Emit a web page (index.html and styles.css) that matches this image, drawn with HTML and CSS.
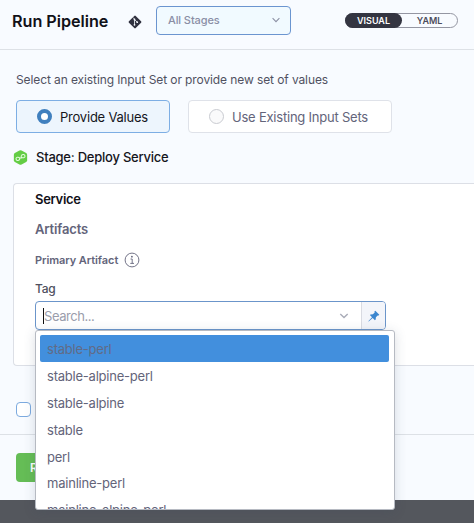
FILE: index.html
```html
<!DOCTYPE html>
<html lang="en">
<head>
<meta charset="utf-8">
<title>Run Pipeline</title>
<link rel="stylesheet" href="styles.css">
</head>
<body>
<div class="dialog">
  <header class="header">
    <h1 class="title"><span>Run Pipeline</span></h1>
    <svg class="git" viewBox="0 0 14 14" width="14" height="14">
      <rect x="2.2" y="2.2" width="9.6" height="9.6" rx="1" transform="rotate(45 7 7)" fill="#30313f"/>
      <path d="M5 2.500 6.500 4.200V9.800M6.500 4.500 9.200 7.100" fill="none" stroke="#f8fbff" stroke-width=".8"/>
      <g fill="#f8fbff"><circle cx="6.500" cy="4.500" r=".9"/><circle cx="6.500" cy="9.800" r=".9"/><circle cx="9.200" cy="7.200" r=".9"/></g>
    </svg>
    <div class="stages"><span>All Stages</span>
      <svg viewBox="0 0 8 6" width="8" height="6"><path d="M.6 1.2 4 4.600 7.400 1.2" fill="none" stroke="#8c90a4" stroke-width="1.1"/></svg>
    </div>
    <div class="toggle"><span class="mode active">VISUAL</span><span class="mode">YAML</span></div>
  </header>
  <main class="content">
    <p class="intro"><span>Select an existing Input Set or provide new set of values</span></p>
    <div class="choices">
      <label class="choice selected"><i class="radio"></i><span>Provide Values</span></label>
      <label class="choice existing"><i class="radio"></i><span>Use Existing Input Sets</span></label>
    </div>
    <div class="stage">
      <svg viewBox="0 0 14 14" width="15" height="15">
        <path d="M6 .4Q7 0 8 .4L12.3 2.8Q13.2 3.4 13.2 4.4V9.6Q13.2 10.6 12.3 11.2L8 13.6Q7 14 6 13.6L1.7 11.2Q.8 10.6.8 9.6V4.4Q.8 3.4 1.7 2.8Z" fill="#64cd45"/>
        <path d="M6.2 8.8C5 10.5 2.8 9.8 2.8 8.2S5 6.200 6.300 7.400 M7.800 5.200C9 3.500 11.200 4.200 11.200 5.800S9 7.800 7.700 6.600M6.200 8.800V7.400H7.700V5.300" fill="none" stroke="#e2fbdc" stroke-width="1"/>
      </svg>
      <span>Stage: Deploy Service</span>
    </div>
    <section class="card">
      <h2 class="service"><span>Service</span></h2>
      <h3 class="artifacts"><span>Artifacts</span></h3>
      <div class="primary"><span>Primary Artifact</span>
        <svg viewBox="0 0 16 16" width="16" height="16"><circle cx="8" cy="8" r="6.900" fill="none" stroke="#63647a" stroke-width=".9"/><circle cx="7.900" cy="4.700" r=".9" fill="#63647a"/><path d="M6.500 7H8.200V11.300M6.300 11.400H10" fill="none" stroke="#63647a" stroke-width=".9"/></svg>
      </div>
      <div class="tag"><span>Tag</span></div>
      <div class="field">
        <div class="search"><i class="caret"></i><span>Search...</span>
          <svg viewBox="0 0 10 6" width="10" height="6"><path d="M1.300 1 5 4.600 8.700 1" fill="none" stroke="#a9acb8" stroke-width="1.400"/></svg>
        </div>
        <div class="pin"><svg viewBox="0 0 12 12" width="12" height="12"><path d="M7.300.7 11.300 4.700 10.600 5.600 9.700 5.400 7.900 7.200 7.700 9.500 6.900 10.200 4.700 8 .7 11.500.3 11.200 4 7.300 1.900 5.100 2.600 4.400 4.900 4.200 6.700 2.400 6.400 1.500Z" fill="#3b86cf"/></svg></div>
        <ul class="menu">
          <li class="highlight"><span>stable-perl</span></li>
          <li><span>stable-alpine-perl</span></li>
          <li><span>stable-alpine</span></li>
          <li><span>stable</span></li>
          <li><span>perl</span></li>
          <li><span>mainline-perl</span></li>
          <li><span>mainline-alpine-perl</span></li>
        </ul>
      </div>
    </section>
    <i class="checkbox"></i>
  </main>
  <footer class="footer"><button class="run">Run</button></footer>
</div>
</body>
</html>
```
FILE: styles.css
```css
* { box-sizing: border-box; }
body { margin: 0; height: 523px; overflow: hidden; background: #54575d; font-family: Inter, "Liberation Sans", sans-serif; font-size: 13px; color: #63647a; }
h1, h2, h3, p, ul { margin: 0; padding: 0; font-weight: inherit; }
svg { display: block; flex: none; }
.dialog { height: 500px; background: #f8fbff; display: flex; flex-direction: column; }
.header { height: 50px; flex: none; display: flex; border-bottom: 1px solid #dde1e6; padding-left: 12px; }
.title { width: 116px; font-size: 16.2px; letter-spacing: -.03px; font-weight: 600; line-height: 20px; padding-top: 11px; color: #111118; white-space: nowrap; }
.git { margin-top: 15px; }
.stages { width: 135px; height: 29px; margin: 6px 0 0 14px; border: 1px solid #6b95d0; border-radius: 4px; background: #f1faff; display: flex; align-items: center; justify-content: space-between; padding: 0 10px 1px 11px; font-size: 11px; letter-spacing: -.1px; font-weight: 500; color: #8a8ea5; }
.toggle { width: 113px; height: 15px; margin: 13px 0 0 54px; border: 1px solid #9496a2; border-radius: 8px; display: flex; font-size: 9px; font-weight: 600; line-height: 13px; color: #4b4c5b; }
.mode { flex: 1; text-align: center; }
.mode.active { flex: none; width: 57px; margin: -1px 0 -1px -1px; line-height: 15px; border-radius: 8px; background: #343541; color: #fff; }
.content { height: 385px; flex: none; border-bottom: 1px solid #dde1e6; }
.intro { height: 50px; padding: 21px 0 0 16px; font-size: 12px; letter-spacing: -.1px; line-height: 17px; color: #50515f; white-space: nowrap; }
.choices { display: flex; gap: 18px; padding-left: 16px; }
.choice { width: 154px; height: 33px; border: 1px solid #dfe2e9; border-radius: 4px; background: #fff; display: flex; align-items: center; gap: 8px; padding-left: 20px; letter-spacing: -.22px; white-space: nowrap; }
.choice.existing { width: 204px; }
.choice.selected { border-color: #7daee4; background: #edf5fd; color: #15151c; }
.radio { width: 15px; height: 15px; border: 1px solid #c9cbd1; border-radius: 50%; background: #fafafb; }
.selected .radio { border: 4px solid #3f7fbe; background: #fff; }
.stage { height: 50px; padding: 0 0 2px 13px; display: flex; align-items: center; gap: 8px; font-size: 13px; letter-spacing: -.24px; font-weight: 500; color: #15151c; }
.card { height: 183px; margin-left: 13px; padding-left: 21px; background: #fff; border: solid #dcdfe6; border-width: 1px 0 1px 1px; border-radius: 4px 0 0 4px; }
.service { height: 30px; line-height: 31px; font-size: 13px; letter-spacing: -.3px; font-weight: 600; color: #111118; }
.artifacts { height: 30px; line-height: 31px; font-size: 13px; letter-spacing: -.15px; font-weight: 600; }
.primary { height: 31px; display: flex; align-items: center; gap: 6px; font-size: 11px; letter-spacing: -.08px; font-weight: 600; }
.tag { height: 26px; line-height: 28px; font-size: 12px; letter-spacing: -.2px; font-weight: 500; color: #4f505e; }
.field { position: relative; width: 351px; height: 29px; border: 1px solid #6b95ca; border-radius: 4px; display: flex; background: #fff; }
.search { flex: 1; display: flex; align-items: center; padding: 0 12px 0 7px; font-size: 13px; letter-spacing: -.45px; color: #9a9dab; }
.search svg { margin-left: auto; }
.caret { width: 1px; height: 16px; background: #111; }
.pin { width: 24px; background: #f3f5fa; border-left: 1px solid #d9dbe2; border-radius: 0 3px 3px 0; display: flex; align-items: center; justify-content: center; }
.menu { position: absolute; z-index: 1; top: 28px; left: -1px; width: 360px; height: 180px; overflow: hidden; list-style: none; padding: 4px 5px 5px 4px; border: 1px solid #b6bac2; border-radius: 3px; background: #fff; box-shadow: 0 2px 12px #3440582e; }
.menu li { height: 26.9px; line-height: 28px; padding-left: 7px; white-space: nowrap; font-size: 13px; letter-spacing: -.22px; }
.menu .highlight { background: #428fdd; border-radius: 2px; color: #616b86; }
.checkbox { display: block; width: 15px; height: 15px; margin: 36px 0 0 16px; border: 1px solid #7caadf; border-radius: 4px; background: #fff; }
.footer { padding: 18px 0 0 16px; }
.run { display: block; width: 60px; height: 29px; border: 0; border-radius: 4px; padding: 0 0 0 14px; text-align: left; background: #65bd56; color: #fff; font: 600 12px Inter, sans-serif; }
```
